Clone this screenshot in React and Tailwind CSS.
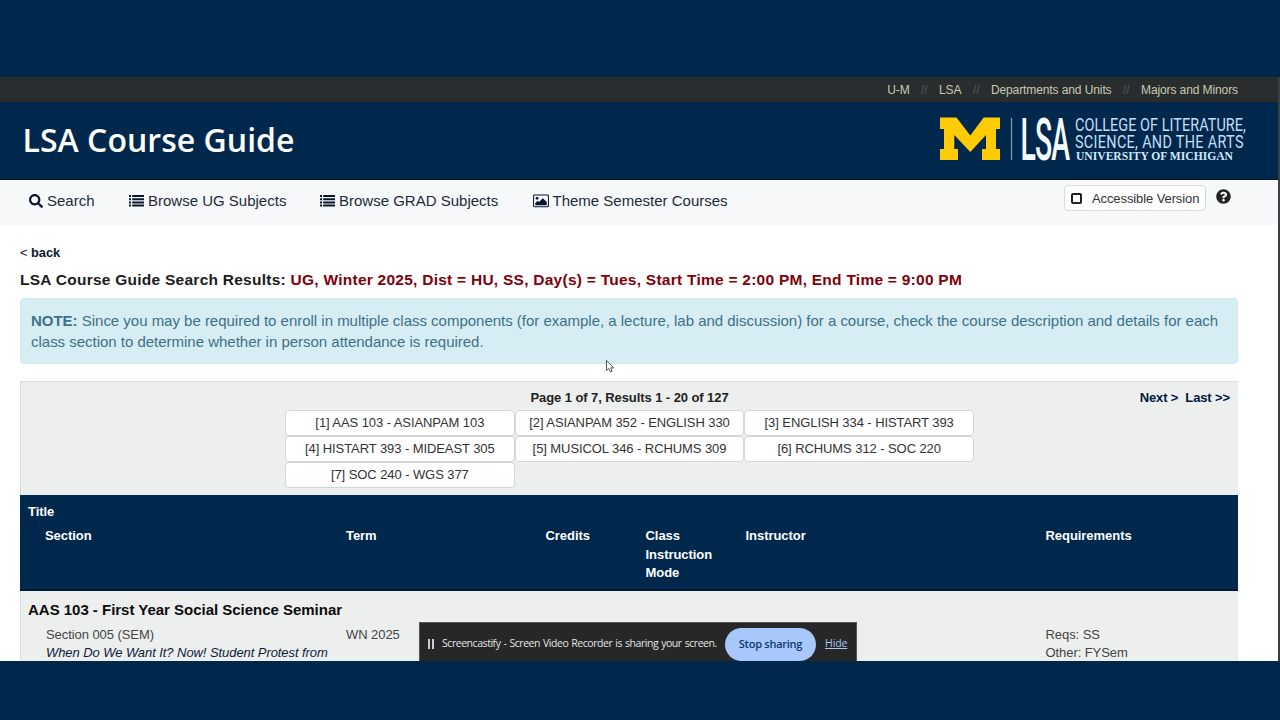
import { FaSearch, FaQuestionCircle } from 'react-icons/fa';

const topLinks = ['U-M', 'LSA', 'Departments and Units', 'Majors and Minors'];

const pages = [
  '[1] AAS 103 - ASIANPAM 103',
  '[2] ASIANPAM 352 - ENGLISH 330',
  '[3] ENGLISH 334 - HISTART 393',
  '[4] HISTART 393 - MIDEAST 305',
  '[5] MUSICOL 346 - RCHUMS 309',
  '[6] RCHUMS 312 - SOC 220',
  '[7] SOC 240 - WGS 377',
];

function Logo() {
  return (
    <svg width="310" height="48" viewBox="0 0 310 48" className="block overflow-visible">
      <path
        fill="#ffcb05"
        d="M1 3.5H17.5L31.3 21.5L44.7 3.5H61V15H57V35H61V46H43V35H47V21L31.3 38L15.3 21V35H19V46H1V35H5V15H1Z"
      />
      <path d="M72.5 4V46" stroke="#7f9bb8" strokeWidth="1.2" />
      <text transform="translate(81.5 46) scale(0.48 1)" fill="#f4fbff" fontFamily="Roboto, sans-serif" fontSize="59" fontWeight="500" textLength="103" lengthAdjust="spacing">LSA</text>
      <g transform="translate(136 0) scale(0.78 1)" fill="#c3dff8" fontFamily="Roboto, sans-serif" fontSize="18.5">
        <text y="17.3" textLength="219" lengthAdjust="spacing">COLLEGE OF LITERATURE,</text>
        <text y="34.3" textLength="216" lengthAdjust="spacing">SCIENCE, AND THE ARTS</text>
      </g>
      <text x="137" y="45.5" fill="#d3e8fa" fontFamily="'Liberation Serif', serif" fontSize="12" fontWeight="700" textLength="157" lengthAdjust="spacingAndGlyphs">UNIVERSITY OF MICHIGAN</text>
    </svg>
  );
}

function ListIcon() {
  return (
    <svg width="15" height="12" viewBox="0 0 15 12" fill="#0a1630">
      {[0, 3.2, 6.4, 9.6].map((y) => (
        <path key={y} d={`M0 ${y}h2v2h-2zM3.2 ${y}h11.8v2h-11.8z`} />
      ))}
    </svg>
  );
}

function PictureIcon() {
  return (
    <svg width="16" height="14" viewBox="0 0 17 14">
      <rect x="0.6" y="0.6" width="15.8" height="12.6" rx="1" fill="none" stroke="#0a1630" strokeWidth="1.1" />
      <circle cx="4.3" cy="4.2" r="1.5" fill="#0a1630" />
      <path d="M2.4 11.5V9.3L5 6.8L6.4 8.1L10.5 4L14.6 8V11.5Z" fill="#0a1630" />
    </svg>
  );
}

function Header() {
  return (
    <header>
      <div className="flex h-[25px] items-center justify-end bg-[#2a2d2e] pr-[40px] text-[12px] tracking-[-0.1px] text-[#c9c9b4]">
        {topLinks.map((label, i) => (
          <span key={label} className="whitespace-nowrap">
            {i > 0 && <span className="px-[11.5px] text-[#55595a]">//</span>}
            {label}
          </span>
        ))}
      </div>
      <div className="flex h-[78px] items-start justify-between border-b border-[#001226] bg-[#00274c] pl-[22.5px] pr-[29px]">
        <h1 className="pt-[16px] font-['Open_Sans',sans-serif] text-[32px] leading-[44px] font-semibold tracking-[0.03px] text-white">
          LSA Course Guide
        </h1>
        <div className="pt-[12px]"><Logo /></div>
      </div>
    </header>
  );
}

function NavBar() {
  return (
    <nav className="flex h-[45px] items-start bg-[#f7f8f9] text-[15px] leading-[21px] text-[#1f2b3a]">
      <a className="ml-[29px] flex w-[100px] items-center gap-[4px] pt-[10px]">
        <FaSearch className="size-[14px] text-[#0a1630]" />Search
      </a>
      <a className="flex w-[191px] items-center gap-[4px] pt-[10px]">
        <ListIcon />Browse UG Subjects
      </a>
      <a className="flex w-[213px] items-center gap-[4px] pt-[10px]">
        <ListIcon />Browse GRAD Subjects
      </a>
      <a className="flex items-center gap-[3.5px] pt-[10px]">
        <PictureIcon />Theme Semester Courses
      </a>
      <div className="mt-[5px] mr-[47px] ml-auto flex items-center gap-[10px]">
        <button className="flex h-[26px] w-[142px] items-center rounded-[4px] border border-[#d5dade] bg-white pl-[6px] text-[13px] tracking-[-0.1px] whitespace-nowrap text-[#333]">
          <span className="mr-[10px] size-[11px] rounded-[2px] border-2 border-[#222]" />
          Accessible Version
        </button>
        <FaQuestionCircle className="mb-[3px] size-[15px] text-[#222]" />
      </div>
    </nav>
  );
}

function Pager() {
  return (
    <div className="h-[114px] border-t border-l border-[#dcdfdf] bg-[#edefef] pt-[6px] text-[13px] leading-[19px] tracking-[-0.08px]">
      <div className="grid grid-cols-3 px-[8px] font-bold">
        <span className="col-start-2 text-center text-[#222]">Page 1 of 7, Results 1 - 20 of 127</span>
        <span className="flex justify-end gap-[7px] tracking-[-0.12px] text-[#00193a]">
          <a>Next &gt;</a>
          <a>Last &gt;&gt;</a>
        </span>
      </div>
      <div className="mt-[3px] ml-[264px] grid w-[689px] grid-cols-3 text-center text-[#333]">
        {pages.map((p) => (
          <a key={p} className="h-[26px] rounded-[4px] border border-[#d3d6d6] bg-white leading-[24px] whitespace-nowrap">{p}</a>
        ))}
      </div>
    </div>
  );
}

function Results() {
  return (
    <div className="text-[13px] leading-[18.5px]">
      <div className="h-[96px] border-b-2 border-[#001a35] bg-[#00274c] pt-[8px] font-bold tracking-[-0.05px] text-white">
        <div className="pl-[8px]">Title</div>
        <div className="mt-[5.5px] flex pl-[25px]">
          <span className="w-[301px]">Section</span>
          <span className="w-[199.5px]">Term</span>
          <span className="w-[100px]">Credits</span>
          <span className="w-[100px] pr-[20px]">Class Instruction Mode</span>
          <span className="w-[300px]">Instructor</span>
          <span>Requirements</span>
        </div>
      </div>
      <div className="h-[90px] border-l border-[#dcdfdf] bg-[#edefef] pt-[8px] text-[#444]">
        <h3 className="pl-[7px] text-[15px] leading-[21px] font-bold tracking-[-0.02px] text-[#0c0c0c]">AAS 103 - First Year Social Science Seminar</h3>
        <div className="mt-[5.5px] flex pl-[25px] tracking-[-0.07px]">
          <div className="w-[300px]">
            <p>Section 005 (SEM)</p>
            <p className="text-[#0b1c3c] italic">When Do We Want It? Now! Student Protest from</p>
          </div>
          <div className="w-[699.5px]">WN 2025</div>
          <div>
            <p>Reqs: SS</p>
            <p>Other: FYSem</p>
          </div>
        </div>
      </div>
    </div>
  );
}

function ShareBar() {
  return (
    <div className="absolute bottom-0 left-[419px] flex h-[39px] w-[438px] items-center border border-b-0 border-[#555] bg-[#272727] pt-[4px] pl-[8px] font-['Open_Sans',sans-serif] text-[10.5px] tracking-[-0.36px] text-[#e4e4e4]">
      <span className="mr-[8px] h-[10px] w-[6px] border-x-2 border-[#ccc]" />
      <span className="w-[283px] tracking-[-0.45px] whitespace-nowrap [word-spacing:0.7px]">Screencastify - Screen Video Recorder is sharing your screen.</span>
      <button className="h-[33px] w-[91px] rounded-full bg-[#a8c7fa] text-[11px] font-semibold tracking-[-0.25px] whitespace-nowrap text-[#0b3a73]">Stop sharing</button>
      <a className="ml-[9px] tracking-[-0.1px] text-[#a8c7fa] underline">Hide</a>
    </div>
  );
}

function Cursor() {
  return (
    <svg className="absolute top-[282px] left-[605px]" width="10" height="15" viewBox="0 0 10 15">
      <path d="M1.5 1.5V11.5L3.8 9.5L5.4 13L7.2 12.2L5.7 8.9H8.7Z" fill="#fff" stroke="#444" strokeWidth="0.9" />
    </svg>
  );
}

export default function App() {
  return (
    <div className="h-[720px] w-[1280px] overflow-hidden bg-[#00274c] pt-[77px] font-['Liberation_Sans',Arial,sans-serif]">
      <div className="relative h-[584px] overflow-hidden border-r-2 border-[#3a3f44] bg-white">
        <Header />
        <NavBar />
        <main className="ml-[20px] w-[1218px] pt-[19px]">
          <p className="text-[12.8px] leading-[18px] text-[#0b1730]">&lt; <b>back</b></p>
          <h2 className="mt-[7px] text-[15.5px] leading-[21px] font-bold tracking-[0.255px] whitespace-nowrap text-[#1b1b1b]">
            LSA Course Guide Search Results:{' '}
            <span className="text-[#80000b]">UG, Winter 2025, Dist = HU, SS, Day(s) = Tues, Start Time = 2:00 PM, End Time = 9:00 PM</span>
          </h2>
          <div className="mt-[8px] mb-[17px] h-[66px] rounded-[4px] border border-[#cdeaf0] bg-[#d7edf4] px-[10px] pt-[11px] text-[15px] leading-[21px] tracking-[-0.015px] text-[#3d7188]">
            <b>NOTE:</b> Since you may be required to enroll in multiple class components (for example, a lecture, lab and discussion) for a course, check the course description and details for each class section to determine whether in person attendance is required.
          </div>
          <Pager />
          <Results />
        </main>
        <Cursor />
        <ShareBar />
      </div>
    </div>
  );
}
